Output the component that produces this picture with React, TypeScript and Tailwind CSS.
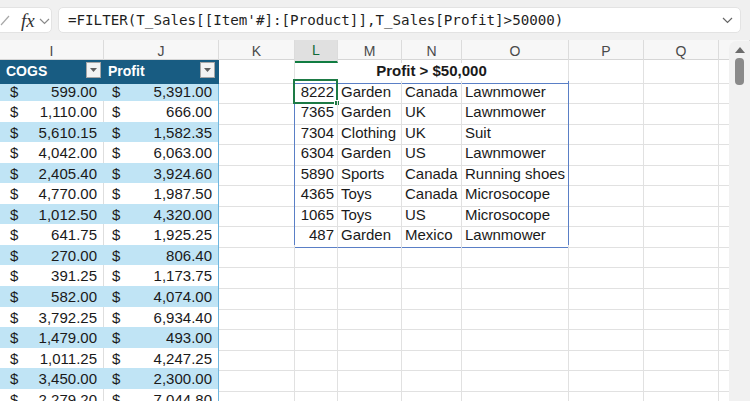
import React from "react";

const COLS =
  "grid grid-cols-[104px_115px_76px_43px_64px_60px_107px_75px_75px_31px]";

const left: [string, string][] = [
  ["599.00", "5,391.00"],
  ["1,110.00", "666.00"],
  ["5,610.15", "1,582.35"],
  ["4,042.00", "6,063.00"],
  ["2,405.40", "3,924.60"],
  ["4,770.00", "1,987.50"],
  ["1,012.50", "4,320.00"],
  ["641.75", "1,925.25"],
  ["270.00", "806.40"],
  ["391.25", "1,173.75"],
  ["582.00", "4,074.00"],
  ["3,792.25", "6,934.40"],
  ["1,479.00", "493.00"],
  ["1,011.25", "4,247.25"],
  ["3,450.00", "2,300.00"],
  ["2,279.20", "7,044.80"],
];

const spill: [string, string, string, string][] = [
  ["8222", "Garden", "Canada", "Lawnmower"],
  ["7365", "Garden", "UK", "Lawnmower"],
  ["7304", "Clothing", "UK", "Suit"],
  ["6304", "Garden", "US", "Lawnmower"],
  ["5890", "Sports", "Canada", "Running shoes"],
  ["4365", "Toys", "Canada", "Microsocope"],
  ["1065", "Toys", "US", "Microsocope"],
  ["487", "Garden", "Mexico", "Lawnmower"],
];

const letters = ["I", "J", "K", "L", "M", "N", "O", "P", "Q", ""];

function FilterBtn() {
  return (
    <div className="absolute right-[3px] top-[2px] w-[15px] h-[16px] bg-[#f3f3f3] border border-[#a6a6a6] flex items-center justify-center">
      <svg width="7" height="4" viewBox="0 0 7 4">
        <path d="M0 0 L7 0 L3.5 4 Z" fill="#606060" />
      </svg>
    </div>
  );
}

function Chevron({ color = "#8a8a8a" }: { color?: string }) {
  return (
    <svg width="11" height="7" viewBox="0 0 11 7">
      <path d="M1 1 L5.5 5.5 L10 1" fill="none" stroke={color} strokeWidth="1.2" />
    </svg>
  );
}

export default function App() {
  const grid = "border-b border-r border-[#e1e1e1]";
  return (
    <div
      className="relative w-[750px] h-[401px] overflow-hidden bg-white text-[#1a1a1a]"
      style={{ fontFamily: '"Liberation Sans", Arial, sans-serif' }}
    >
      {/* Formula bar */}
      <div className="h-[40px] bg-[#f0f0f0] flex items-start pt-[7px] gap-[6px]">
        <div className="ml-[-8px] w-[60px] h-[26px] bg-white border border-[#e3e3e3] rounded-[5px] flex items-center">
          <svg width="14" height="14" viewBox="0 0 14 14" className="ml-[4px]">
            <path d="M4 12 L12 3" stroke="#a8a8a8" strokeWidth="1.2" fill="none" />
          </svg>
          <span
            className="ml-[10px] text-[19px] italic leading-none text-[#333]"
            style={{ fontFamily: '"Liberation Serif", serif' }}
          >
            fx
          </span>
          <span className="ml-[4px] mt-[2px]">
            <Chevron />
          </span>
        </div>
        <div className="flex-1 mr-[9px] h-[26px] bg-white border border-[#e3e3e3] rounded-[5px] flex items-center pl-[9px] pr-[7px]">
          <span
            className="flex-1 text-[14.2px] leading-none text-[#1f1f1f] whitespace-nowrap"
            style={{ fontFamily: '"DejaVu Sans Mono", monospace' }}
          >
            =FILTER(T_Sales[[Item'#]:[Product]],T_Sales[Profit]&gt;50000)
          </span>
          <Chevron color="#666" />
        </div>
      </div>

      {/* Column headers */}
      <div className={`${COLS} h-[20px] bg-[#f7f7f7] border-b border-[#d6d6d6]`}>
        {letters.map((l, i) => (
          <div
            key={i}
            className={`flex items-center justify-center text-[14px] border-r border-[#dcdcdc] ${
              l === "L"
                ? "bg-[#e0e0e0] text-[#0f6b37] border-b-2 border-b-[#107c41]"
                : "text-[#4a4a4a]"
            }`}
          >
            {l}
          </div>
        ))}
      </div>

      {/* Title row */}
      <div className={`${COLS} h-[20.56px]`}>
        <div className="relative bg-[#185c82] border-b border-[#185c82] flex items-center pl-[6px] text-white font-bold text-[14px]">
          COGS
          <FilterBtn />
        </div>
        <div className="relative bg-[#185c82] border-b border-r border-[#185c82] flex items-center pl-[4px] text-white font-bold text-[14px]">
          Profit
          <FilterBtn />
        </div>
        <div className={grid} />
        <div className="col-span-4 border-b border-r border-b-[#5a7fc6] border-r-[#e1e1e1] flex items-center justify-center font-bold text-[15px]">
          Profit &gt; $50,000
        </div>
        <div className={grid} />
        <div className={grid} />
        <div className={grid} />
      </div>

      {/* Data rows */}
      {left.map((lv, r) => {
        const band = r % 2 === 0;
        const bg = band ? "bg-[#c0e4f5]" : "bg-white";
        const sp = spill[r];
        const inSpill = r < spill.length;
        const lastSpill = r === spill.length - 1;
        const spB = lastSpill ? "border-b-[#5a7fc6]" : "border-b-[#e1e1e1]";
        return (
          <div key={r} className={`${COLS} h-[20.56px] text-[15px]`}>
            <div
              className={`${bg} border-b border-r border-b-[#93cdea] ${
                band ? "border-r-[#c0e4f5]" : "border-r-[#dedede]"
              } flex items-center justify-between pl-[10px] pr-[6px]`}
            >
              <span>$</span>
              <span>{lv[0]}</span>
            </div>
            <div
              className={`${bg} border-b border-r border-b-[#93cdea] border-r-[#6fb6de] flex items-center justify-between pl-[8px] pr-[6px]`}
            >
              <span>$</span>
              <span>{lv[1]}</span>
            </div>
            <div
              className={`border-b border-r border-b-[#e1e1e1] ${
                inSpill ? "border-r-[#5a7fc6]" : "border-r-[#e1e1e1]"
              }`}
            />
            {inSpill ? (
              <>
                <div
                  className={`relative border-b border-r ${spB} border-r-[#e1e1e1] flex items-center justify-end pr-[3px]`}
                >
                  {sp[0]}
                  {r === 0 && (
                    <div className="absolute left-[-2px] top-[-2px] right-[-1px] bottom-[-1px] border-2 border-[#1d7a45]">
                      <div className="absolute right-[-4px] bottom-[-4px] w-[6px] h-[6px] bg-[#1d7a45] border border-white" />
                    </div>
                  )}
                </div>
                <div className={`border-b border-r ${spB} border-r-[#e1e1e1] flex items-center pl-[3px]`}>
                  {sp[1]}
                </div>
                <div className={`border-b border-r ${spB} border-r-[#e1e1e1] flex items-center pl-[3px]`}>
                  {sp[2]}
                </div>
                <div className={`border-b border-r ${spB} border-r-[#5a7fc6] flex items-center pl-[3px] whitespace-nowrap`}>
                  {sp[3]}
                </div>
              </>
            ) : (
              <>
                <div className={grid} />
                <div className={grid} />
                <div className={grid} />
                <div className={grid} />
              </>
            )}
            <div className={grid} />
            <div className={grid} />
            <div className={grid} />
          </div>
        );
      })}

      {/* Vertical scrollbar */}
      <div className="absolute left-[729px] top-[41px] w-[21px] h-[360px] bg-[#f1f1f1] rounded-tl-[8px] flex flex-col items-center">
        <svg width="10" height="6" viewBox="0 0 10 6" className="mt-[6px]">
          <path d="M0 6 L5 0 L10 6 Z" fill="#6b6b6b" />
        </svg>
        <div className="mt-[5px] w-[9px] h-[27px] rounded-[4px] bg-[#8a8a8a]" />
      </div>
    </div>
  );
}
